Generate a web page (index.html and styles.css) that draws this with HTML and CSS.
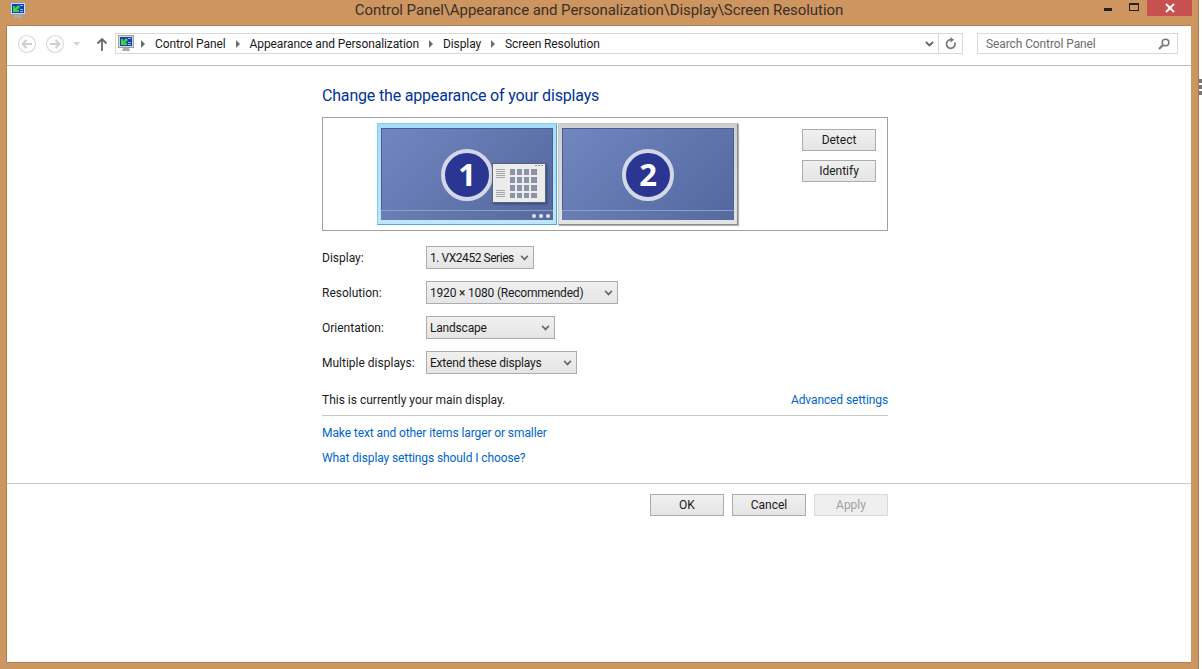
FILE: index.html
```html
<!DOCTYPE html>
<html lang="en">

<head>
  <meta charset="UTF-8">
  <title>Screen Resolution</title>
  <link rel="stylesheet" href="styles.css">
</head>

<body>
  <div class="window">
    <div class="titlebar">
      <svg class="app-icon" width="16" height="17" viewBox="0 0 16 17">
        <rect x="0.5" y="0.5" width="15" height="12" fill="#d4d8dc" stroke="#9aa0a6" />
        <rect x="2" y="2" width="12" height="9" fill="#1440b0" />
        <path d="M8 3 5 6V4H3v6h6V8H7l3-3z" fill="#3fd23f" />
        <path d="M10 7.500h3M10 9.500h3M10 3.500h3" stroke="#8fb4ff" />
        <path d="M5 13h6l1 3H4z" fill="#a8acb0" />
      </svg>
      <div class="title">Control Panel\Appearance and Personalization\Display\Screen Resolution</div>
      <div class="win-controls">
        <div class="win-btn"><span class="ico-min"></span></div>
        <div class="win-btn"><span class="ico-max"></span></div>
        <div class="win-close">
          <svg width="10" height="10" viewBox="0 0 10 10">
            <path d="M1 1 9 9M9 1 1 9" stroke="#fff" stroke-width="2" />
          </svg>
        </div>
      </div>
    </div>

    <div class="client">
      <div class="navbar">
        <svg class="nav-btn" width="20" height="20" viewBox="0 0 20 20">
          <circle cx="10" cy="10" r="8.500" fill="none" stroke="#d9d9d9" stroke-width="1.200" />
          <path d="M15 10H6M9.500 6 5.500 10l4 4" fill="none" stroke="#cfcfcf" stroke-width="2" />
        </svg>
        <svg class="nav-btn" width="20" height="20" viewBox="0 0 20 20">
          <circle cx="10" cy="10" r="8.500" fill="none" stroke="#d9d9d9" stroke-width="1.200" />
          <path d="M5 10h9M10.500 6l4 4-4 4" fill="none" stroke="#cfcfcf" stroke-width="2" />
        </svg>
        <svg class="nav-recent" width="8" height="4" viewBox="0 0 8 4">
          <path d="M0 0h7L3.500 4z" fill="#d4d4d4" />
        </svg>
        <svg class="nav-up" width="12" height="14" viewBox="0 0 12 14">
          <path d="M6 14V2M1.500 6.500 6 2l4.500 4.500" fill="none" stroke="#6a6a6a" stroke-width="1.800" />
        </svg>

        <div class="address">
          <svg class="addr-icon" width="16" height="17" viewBox="0 0 16 17">
            <rect x="0.5" y="0.5" width="15" height="12" fill="#d4d8dc" stroke="#9aa0a6" />
            <rect x="2" y="2" width="12" height="9" fill="#1440b0" />
            <path d="M8 3 5 6V4H3v6h6V8H7l3-3z" fill="#3fd23f" />
            <path d="M10 7.500h3M10 9.500h3M10 3.500h3" stroke="#8fb4ff" />
            <path d="M5 13h6l1 3H4z" fill="#a8acb0" />
          </svg>
          <span class="crumb-arrow"></span>
          <span class="crumb">Control Panel</span>
          <span class="crumb-arrow"></span>
          <span class="crumb">Appearance and Personalization</span>
          <span class="crumb-arrow"></span>
          <span class="crumb">Display</span>
          <span class="crumb-arrow"></span>
          <span class="crumb">Screen Resolution</span>
          <svg class="addr-drop" width="9" height="6" viewBox="0 0 9 6">
            <path d="M1 1 4.500 4.500 8 1" fill="none" stroke="#666" stroke-width="1.800" />
          </svg>
          <div class="addr-refresh">
            <svg width="12" height="13" viewBox="0 0 12 13">
              <path d="M9.800 5.500A4.300 4.300 0 1 1 6 2.700" fill="none" stroke="#777" stroke-width="1.700" />
              <path d="M5.500 0v5.500L9 2.700z" fill="#777" />
            </svg>
          </div>
        </div>

        <div class="search">
          <span>Search Control Panel</span>
          <svg width="12" height="12" viewBox="0 0 12 12">
            <circle cx="7.500" cy="4.500" r="3.300" fill="none" stroke="#777" stroke-width="1.600" />
            <path d="M5 7 1 11" stroke="#777" stroke-width="2.200" />
          </svg>
        </div>
      </div>

      <div class="content">
        <h1 class="heading">Change the appearance of your displays</h1>

        <div class="panel">
          <div class="monitor selected">
            <div class="screen">
              <div class="badge">1</div>
              <svg class="mini-window" width="54" height="40" viewBox="0 0 54 40">
                <rect x="0.500" y="0.500" width="53" height="39" fill="#ececec" stroke="#5c6078" />
                <path d="M43 2.500h2M46 2.500h2M49 2.500h2" stroke="#8d92a0" />
                <path d="M4 6.500h9M4 8.500h9M4 10.500h9M4 12.500h9M4 14.500h9M4 27.500h9M4 29.500h9M4 31.500h9M4 33.500h9" stroke="#a6a6a6" />
                <g fill="#8d93a6">
                  <rect x="18" y="6" width="5" height="6" />
                  <rect x="25" y="6" width="5" height="6" />
                  <rect x="32" y="6" width="5" height="6" />
                  <rect x="39" y="6" width="6" height="6" />
                  <rect x="18" y="14" width="5" height="6" />
                  <rect x="25" y="14" width="5" height="6" />
                  <rect x="32" y="14" width="5" height="6" />
                  <rect x="39" y="14" width="6" height="6" />
                  <rect x="18" y="22" width="5" height="6" />
                  <rect x="25" y="22" width="5" height="6" />
                  <rect x="32" y="22" width="5" height="6" />
                  <rect x="39" y="22" width="6" height="6" />
                  <rect x="18" y="30" width="5" height="5" />
                  <rect x="25" y="30" width="5" height="5" />
                  <rect x="32" y="30" width="5" height="5" />
                  <rect x="39" y="30" width="6" height="5" />
                </g>
              </svg>
            </div>
            <div class="taskbar">
              <span class="dot"></span><span class="dot"></span><span class="dot"></span>
            </div>
          </div>
          <div class="monitor">
            <div class="screen">
              <div class="badge">2</div>
            </div>
            <div class="taskbar"></div>
          </div>
          <div class="panel-btns">
            <div class="btn">Detect</div>
            <div class="btn">Identify</div>
          </div>
        </div>

        <div class="form">
          <div class="form-row">
            <label>Display:</label>
            <div class="select w-display">1. VX2452 Series<span class="chev"></span></div>
          </div>
          <div class="form-row">
            <label>Resolution:</label>
            <div class="select w-res">1920 × 1080 (Recommended)<span class="chev"></span></div>
          </div>
          <div class="form-row">
            <label>Orientation:</label>
            <div class="select w-orient">Landscape<span class="chev"></span></div>
          </div>
          <div class="form-row">
            <label>Multiple displays:</label>
            <div class="select w-multi">Extend these displays<span class="chev"></span></div>
          </div>
        </div>

        <div class="status-row">
          <span>This is currently your main display.</span>
          <a class="link">Advanced settings</a>
        </div>
        <div class="links">
          <a class="link">Make text and other items larger or smaller</a>
          <a class="link">What display settings should I choose?</a>
        </div>
      </div>

      <div class="footer">
        <div class="btn">OK</div>
        <div class="btn">Cancel</div>
        <div class="btn disabled">Apply</div>
      </div>
    </div>
  </div>

  <div class="behind">
    <span></span><span></span><span></span>
  </div>
</body>

</html>
```
FILE: styles.css
```css
html,
body {
  margin: 0;
  height: 100%;
  overflow: hidden;
}

body {
  display: flex;
  background-color: #fff;
  color: #1a1a1a;
  font-family: Roboto, "Liberation Sans", sans-serif;
  font-size: 12px;
}

.window {
  width: 1199px;
  height: 669px;
  flex: none;
  box-sizing: border-box;
  padding: 0 7px 7px 7px;
  display: flex;
  flex-direction: column;
  background-color: #cd9560;
  border-right: 1px solid #a9794c;
}

/* title bar */
.titlebar {
  height: 26px;
  flex: none;
  position: relative;
  display: flex;
  justify-content: center;
}

.app-icon {
  position: absolute;
  left: 3px;
  top: 2px;
}

.title {
  font-size: 15px;
  line-height: 21px;
  letter-spacing: -0.06px;
  color: #3a3027;
}

.win-controls {
  position: absolute;
  right: -1px;
  top: 0;
  display: flex;
}

.win-btn {
  width: 26px;
  height: 16px;
  display: flex;
  justify-content: center;
}

.ico-min {
  width: 8px;
  height: 3px;
  margin-top: 8px;
  background-color: #222;
}

.ico-max {
  width: 8px;
  height: 5px;
  margin-top: 3px;
  border: 1px solid #222;
  border-top-width: 2px;
}

.win-close {
  width: 45px;
  height: 16px;
  background-color: #c75050;
  display: flex;
  justify-content: center;
  align-items: center;
}

/* client area */
.client {
  flex: 1;
  display: flex;
  flex-direction: column;
  background-color: #fff;
  box-shadow: 0 -1px 0 #b08050, -1px 0 0 #b08050, 0 1px 0 #b08050;
}

.navbar {
  height: 40px;
  flex: none;
  box-sizing: border-box;
  display: flex;
  align-items: center;
  padding: 0 13px 4px 10px;
  border-bottom: 1px solid #b9b9b9;
}

.nav-btn {
  margin-right: 8px;
}

.nav-up {
  margin-left: 15px;
}

.address {
  width: 848px;
  height: 21px;
  margin-left: 7px;
  box-sizing: border-box;
  display: flex;
  align-items: center;
  border: 1px solid #d9d9d9;
  padding-left: 2px;
  letter-spacing: -0.1px;
}

.addr-icon {
  margin-right: 7px;
}

.crumb {
  margin: 0 10px;
}

.crumb-arrow {
  width: 0;
  height: 0;
  border-left: 4px solid #6d6d6d;
  border-top: 4px solid transparent;
  border-bottom: 4px solid transparent;
}

.addr-drop {
  margin-left: auto;
  margin-right: 4px;
}

.addr-refresh {
  width: 23px;
  height: 100%;
  display: flex;
  justify-content: center;
  align-items: center;
  border-left: 1px solid #d9d9d9;
}

.search {
  width: 201px;
  height: 21px;
  margin-left: 14px;
  box-sizing: border-box;
  display: flex;
  align-items: center;
  justify-content: space-between;
  border: 1px solid #d9d9d9;
  padding: 0 7px 0 8px;
  color: #6d6d6d;
  letter-spacing: -0.1px;
}

/* main column */
.content {
  width: 566px;
  margin-left: 315px;
  flex: none;
}

.heading {
  margin: 19px 0 11px;
  font-size: 16px;
  font-weight: normal;
  line-height: 21px;
  letter-spacing: -0.18px;
  color: #003399;
}

.panel {
  height: 114px;
  box-sizing: border-box;
  display: flex;
  align-items: flex-start;
  padding: 5px 11px 0 54px;
  border: 1px solid #a0a0a0;
}

.monitor {
  width: 180px;
  height: 102px;
  box-sizing: border-box;
  display: flex;
  flex-direction: column;
  padding: 4px 3px;
  border: 1px solid;
  border-color: #c8c8c8 #8a8a8a #8a8a8a #c8c8c8;
  background: linear-gradient(#cfcfcf, #e4e4e4);
  box-shadow: 1px 1px 1px #b5b5b5;
}

.monitor.selected {
  margin-right: 1px;
  border-color: #7fcdf5 #4ea8e0 #4ea8e0 #7fcdf5;
  background: linear-gradient(#a6dcf8, #bfe6fb);
  box-shadow: none;
}

.screen {
  flex: 1;
  position: relative;
  display: flex;
  justify-content: center;
  align-items: center;
  background: linear-gradient(135deg, #7286bf, #5468a0);
  box-shadow: inset 1px 1px 0 #4a5c98, inset -1px 0 0 #4a5c98;
}

.badge {
  width: 44px;
  height: 44px;
  margin-top: 11px;
  display: flex;
  justify-content: center;
  align-items: center;
  border: 4px solid #d3d7e8;
  border-radius: 50%;
  background-color: #2b3592;
  color: #fff;
  font-family: "Open Sans", sans-serif;
  font-size: 31px;
  font-weight: 700;
  line-height: 1;
}

.mini-window {
  position: absolute;
  right: 7px;
  top: 35px;
  box-shadow: 1px 1px 2px rgba(30, 40, 90, 0.6);
}

.taskbar {
  height: 9px;
  flex: none;
  display: flex;
  justify-content: flex-end;
  align-items: center;
  gap: 3px;
  padding-right: 3px;
  border-top: 1px solid #8c9dd0;
  background: linear-gradient(90deg, #6b7eb3, #566a9e);
}

.dot {
  width: 4px;
  height: 4px;
  border-radius: 50%;
  background-color: #dfe5f5;
}

.panel-btns {
  margin-left: auto;
  margin-top: 6px;
  display: flex;
  flex-direction: column;
  gap: 9px;
}

.btn {
  width: 74px;
  height: 22px;
  box-sizing: border-box;
  display: flex;
  justify-content: center;
  align-items: center;
  border: 1px solid #acacac;
  background: linear-gradient(#f0f0f0, #e5e5e5);
}

.btn.disabled {
  border-color: #d9d9d9;
  background: #efefef;
  color: #a0a0a0;
}

/* form */
.form {
  margin-top: 15px;
  display: flex;
  flex-direction: column;
  gap: 12px;
}

.form-row {
  display: flex;
  align-items: center;
}

.form-row label {
  width: 104px;
}

.select {
  height: 23px;
  box-sizing: border-box;
  display: flex;
  align-items: center;
  justify-content: space-between;
  padding: 0 5px 0 3px;
  border: 1px solid #acacac;
  background: linear-gradient(#f0f0f0, #e5e5e5);
  letter-spacing: -0.2px;
  white-space: nowrap;
}

.w-display {
  width: 108px;
  letter-spacing: -0.45px;
}

.w-res {
  width: 192px;
}

.w-orient {
  width: 129px;
}

.w-multi {
  width: 151px;
}

.chev {
  width: 5px;
  height: 5px;
  margin-top: -3px;
  border-right: 2px solid #666;
  border-bottom: 2px solid #666;
  transform: rotate(45deg) scale(0.8);
}

.status-row {
  margin-top: 17px;
  height: 17px;
  padding-bottom: 7px;
  display: flex;
  justify-content: space-between;
  align-items: center;
  border-bottom: 1px solid #c8c8c8;
}

.link {
  color: #0066cc;
  letter-spacing: -0.1px;
}

.links {
  margin-top: 9px;
  display: flex;
  flex-direction: column;
  gap: 8px;
  line-height: 17px;
}

/* bottom buttons */
.footer {
  box-sizing: border-box;
  margin-top: 16px;
  padding: 10px 303px 0 0;
  display: flex;
  justify-content: flex-end;
  gap: 8px;
  border-top: 1px solid #c8c8c8;
}

/* desktop behind the window */
.behind {
  flex: 1;
  padding-top: 79px;
  display: flex;
  flex-direction: column;
  gap: 2px;
}

.behind span {
  height: 4px;
  background-color: #777;
}
```
